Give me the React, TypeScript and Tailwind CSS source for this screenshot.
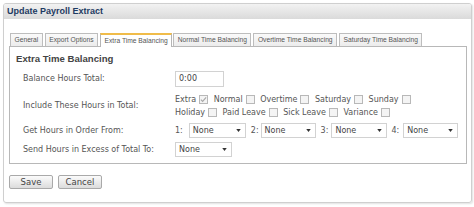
import type { ReactNode } from 'react';

const tabs = [
  'General',
  'Export Options',
  'Extra Time Balancing',
  'Normal Time Balancing',
  'Overtime Time Balancing',
  'Saturday Time Balancing',
];

function Check({ checked = false }: { checked?: boolean }) {
  return (
    <span className="inline-flex w-[9px] h-[9px] border border-[#b8b8b8] bg-[#f4f4f4] items-center justify-center mx-[3px] align-middle">
      {checked && (
        <svg viewBox="0 0 8 8" className="w-[7px] h-[7px]">
          <path d="M1 4.2 L3 6.2 L7 1.5" fill="none" stroke="#a8a8a8" strokeWidth="1.3" />
        </svg>
      )}
    </span>
  );
}

function Select({ width }: { width: string }) {
  return (
    <div className={`${width} h-[15px] border border-[#d2d2d2] bg-white flex items-center justify-between pl-[3px] pr-[4px] text-[#444]`}>
      <span>None</span>
      <svg viewBox="0 0 6 4" className="w-[5px] h-[3px]">
        <path d="M0 0 L6 0 L3 4 Z" fill="#333" />
      </svg>
    </div>
  );
}

function Row({ label, children, className = '' }: { label: string; children: ReactNode; className?: string }) {
  return (
    <div className={`flex items-center ${className}`}>
      <div className="w-[152px] shrink-0">{label}</div>
      <div>{children}</div>
    </div>
  );
}

export default function App() {
  return (
    <div className="w-[474px] h-[207px] bg-white pt-[3px] pl-[3px] font-['DejaVu_Sans',sans-serif] text-[8px] text-[#555]">
      <div className="w-[469px] h-[200px] border border-[#cfcfcf] rounded-[3px] shadow-[1px_1px_2px_rgba(0,0,0,0.12)] overflow-hidden">
        <div className="h-[15px] bg-gradient-to-b from-[#f2f2f2] to-[#dadada] pl-[3px] flex items-center font-['Liberation_Sans',sans-serif] font-bold text-[9px] text-[#1e3a62]">
          Update Payroll Extract
        </div>

        <div className="pl-[5px] pt-[13px]">
          <div className="flex pl-[1px] font-['Liberation_Sans',sans-serif] text-[6.7px] text-[#555]">
            {tabs.map((t, i) => {
              const active = i === 2;
              return (
                <div
                  key={t}
                  className={
                    active
                      ? 'h-[14px] px-[3.5px] mr-[1px] flex items-center bg-white border border-b-0 border-[#b5b5b5] border-t-[2px] border-t-[#f0bc4a] relative top-[1px] z-10'
                      : 'h-[13px] px-[3.5px] mr-[2px] mt-[1px] flex items-center bg-gradient-to-b from-[#fafafa] to-[#ececec] border border-b-0 border-[#bdbdbd]'
                  }
                >
                  {t}
                </div>
              );
            })}
          </div>

          <div className="w-[458px] h-[118px] border border-[#b8b8b8] pl-[6px] pt-[6px]">
            <div className="font-['Liberation_Sans',sans-serif] font-bold text-[9.6px] text-[#444] leading-[12px]">Extra Time Balancing</div>
            <div className="pl-[7px] mt-[6px]">
              <Row label="Balance Hours Total:">
                <div className="w-[49px] h-[16px] border border-[#d2d2d2] flex items-center pl-[3px] text-[#444]">0:00</div>
              </Row>
              <Row label="Include These Hours in Total:" className="mt-[6px]">
                <div className="leading-[13px] text-[#555]">
                  <div>
                    Extra<Check checked /> Normal<Check /> Overtime<Check /> Saturday<Check /> Sunday<Check />
                  </div>
                  <div>
                    Holiday<Check /> Paid Leave<Check /> Sick Leave<Check /> Variance<Check />
                  </div>
                </div>
              </Row>
              <Row label="Get Hours in Order From:" className="mt-[4px]">
                <div className="flex items-center">
                  <span className="mr-[6px]">1:</span>
                  <Select width="w-[57px]" />
                  <span className="ml-[5px] mr-[2px]">2:</span>
                  <Select width="w-[55px]" />
                  <span className="ml-[5px] mr-[3px]">3:</span>
                  <Select width="w-[56px]" />
                  <span className="ml-[4px] mr-[4px]">4:</span>
                  <Select width="w-[55px]" />
                </div>
              </Row>
              <Row label="Send Hours in Excess of Total To:" className="mt-[4px]">
                <Select width="w-[57px]" />
              </Row>
            </div>
          </div>

          <div className="flex gap-[5px] mt-[11px] text-[8.5px] text-[#444]">
            <button className="w-[44px] h-[14px] border border-[#a9a9a9] rounded-[2px] bg-gradient-to-b from-[#fbfbfb] to-[#dcdcdc] flex items-center justify-center">
              Save
            </button>
            <button className="w-[44px] h-[14px] border border-[#a9a9a9] rounded-[2px] bg-gradient-to-b from-[#fbfbfb] to-[#dcdcdc] flex items-center justify-center">
              Cancel
            </button>
          </div>
        </div>
      </div>
    </div>
  );
}
